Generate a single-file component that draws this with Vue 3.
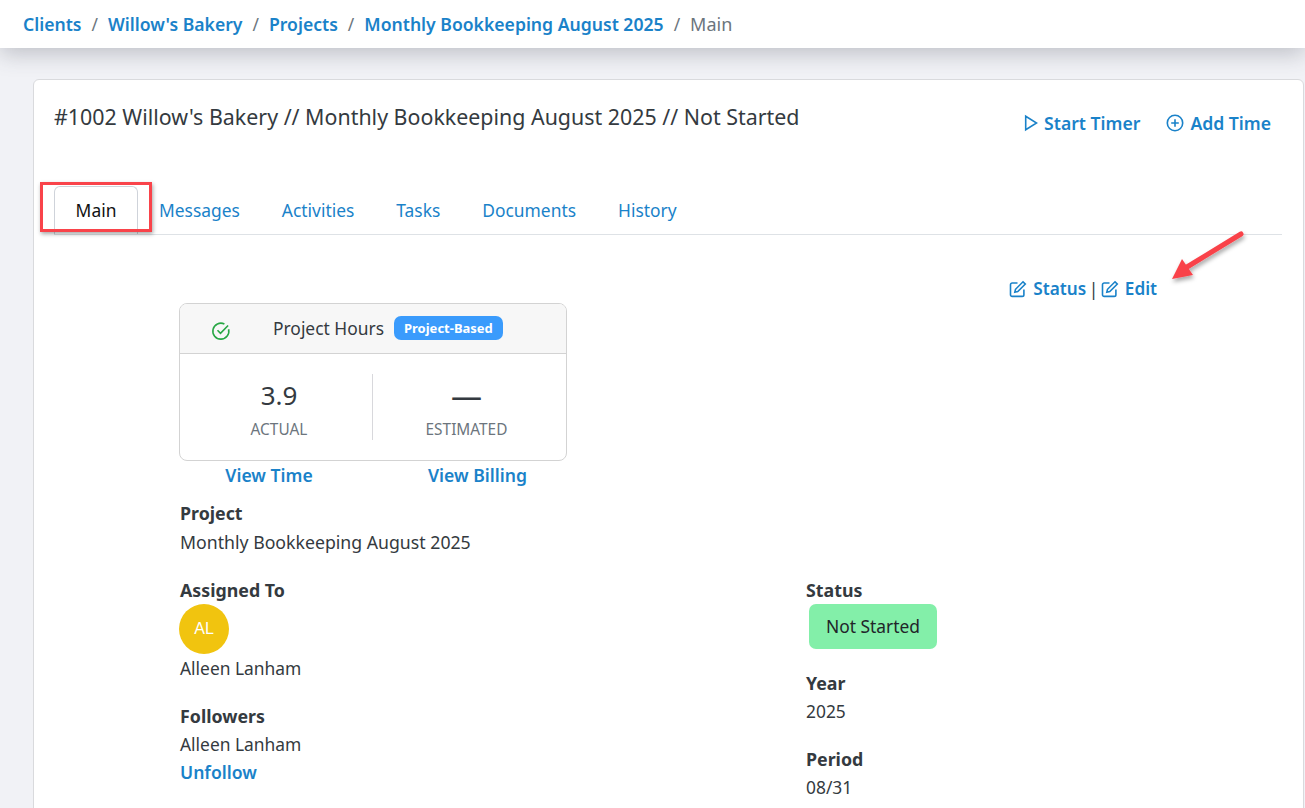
<script setup>
const crumbs = ['Clients', "Willow's Bakery", 'Projects', 'Monthly Bookkeeping August 2025']
const tabs = ['Main', 'Messages', 'Activities', 'Tasks', 'Documents', 'History']
</script>

<template>
  <div class="page">
    <nav class="topbar">
      <template v-for="c in crumbs" :key="c">
        <a class="crumb">{{ c }}</a>
        <span class="sep">/</span>
      </template>
      <span class="current">Main</span>
    </nav>

    <main class="card">
      <div class="title-row">
        <h1 class="title">#1002 Willow's Bakery // Monthly Bookkeeping August 2025 // Not Started</h1>
        <div class="actions">
          <a class="action">
            <svg class="icon play" viewBox="0 0 14 18"><path d="M1.7 2.2 L12.6 9 L1.7 15.8 Z" /></svg>
            Start Timer
          </a>
          <a class="action">
            <svg class="icon" viewBox="0 0 18 18">
              <circle cx="9" cy="9" r="7.7" />
              <path d="M9 5.2v7.6M5.2 9h7.6" />
            </svg>
            Add Time
          </a>
        </div>
      </div>

      <ul class="tabs">
        <li v-for="(t, i) in tabs" :key="t" class="tab" :class="{ active: i === 0 }">{{ t }}</li>
      </ul>

      <div class="edit-links">
        <a class="action">
          <svg class="icon" viewBox="0 0 18 18">
            <path d="M8.5 3H3.2A1.7 1.7 0 0 0 1.5 4.7v10a1.7 1.7 0 0 0 1.7 1.7h10a1.7 1.7 0 0 0 1.7-1.7V9.5" />
            <path d="M14 1.8l2.3 2.3-7.5 7.5-3 .7.7-3z" />
          </svg>
          Status
        </a>
        <span class="pipe">|</span>
        <a class="action">
          <svg class="icon" viewBox="0 0 18 18">
            <path d="M8.5 3H3.2A1.7 1.7 0 0 0 1.5 4.7v10a1.7 1.7 0 0 0 1.7 1.7h10a1.7 1.7 0 0 0 1.7-1.7V9.5" />
            <path d="M14 1.8l2.3 2.3-7.5 7.5-3 .7.7-3z" />
          </svg>
          Edit
        </a>
      </div>

      <div class="details">
        <div class="hours">
          <div class="hours-head">
            <svg class="check" viewBox="0 0 20 20">
              <path d="M17.6 8.2A8 8 0 1 1 13.4 3" stroke="#28a745" />
              <path d="M6.5 9.3l3 3 7.6-7.8" stroke="#28a745" />
            </svg>
            <span class="hours-title">Project Hours</span>
            <span class="pill">Project-Based</span>
          </div>
          <div class="hours-body">
            <div class="stat">
              <div class="stat-num">3.9</div>
              <div class="stat-label">ACTUAL</div>
            </div>
            <div class="stat">
              <div class="stat-num dash">—</div>
              <div class="stat-label">ESTIMATED</div>
            </div>
          </div>
        </div>
        <div class="hours-links">
          <a class="link">View Time</a>
          <a class="link">View Billing</a>
        </div>

        <div class="label">Project</div>
        <div class="value project-value">Monthly Bookkeeping August 2025</div>

        <div class="columns">
          <div>
            <div class="label">Assigned To</div>
            <div class="avatar">AL</div>
            <div class="value">Alleen Lanham</div>
            <div class="label followers">Followers</div>
            <div class="value">Alleen Lanham</div>
            <a class="link">Unfollow</a>
          </div>
          <div>
            <div class="label">Status</div>
            <div class="status">Not Started</div>
            <div class="label year">Year</div>
            <div class="value">2025</div>
            <div class="label period">Period</div>
            <div class="value">08/31</div>
          </div>
        </div>
      </div>
    </main>

    <!-- annotations on the screenshot -->
    <div class="mark-box"></div>
    <svg class="mark-arrow" viewBox="0 0 90 70" width="90" height="70">
      <defs>
        <filter id="arrow-shadow" x="-20%" y="-20%" width="150%" height="150%">
          <feDropShadow dx="1" dy="3" stdDeviation="2" flood-color="#000" flood-opacity="0.35" />
        </filter>
      </defs>
      <g filter="url(#arrow-shadow)">
        <path d="M27 41 L81 8" stroke="#f9434a" stroke-width="5" stroke-linecap="round" />
        <path d="M12 53 L22 33 L33 49 Z" fill="#f9434a" />
      </g>
    </svg>
  </div>
</template>

<style>
html, body {
  margin: 0;
  background: #f1f2f6;
}
</style>

<style scoped>
.page {
  position: relative;
  height: 808px;
  overflow: hidden;
  background: #f1f2f6;
  font-family: "Noto Sans", "Open Sans", sans-serif;
  font-size: 17.4px;
  line-height: 28px;
  color: #343a40;
}

a {
  color: #1a82c9;
  text-decoration: none;
}

.topbar {
  display: flex;
  align-items: center;
  height: 48px;
  padding-left: 23px;
  background: #fff;
  box-shadow: 0 6px 22px rgba(60, 65, 80, 0.28);
}

.crumb {
  font-size: 17.6px;
  font-weight: 600;
  color: #1a82c9;
}

.sep {
  margin: 0 10px;
  color: #6c757d;
}

.current {
  font-size: 18px;
  color: #6c757d;
}

.card {
  box-sizing: border-box;
  height: 760px;
  margin: 31px 1px 0 33px;
  padding: 0 21px 0 20px;
  background: #fff;
  border: 1px solid #d9dadd;
  border-radius: 6px;
}

.title-row {
  display: flex;
  align-items: flex-start;
  justify-content: space-between;
  box-sizing: border-box;
  height: 106px;
  padding: 21px 11px 0 0;
}

.title {
  margin: 0;
  font-size: 21.4px;
  line-height: 32px;
  font-weight: 400;
  color: #343a40;
}

.actions {
  display: flex;
  gap: 26px;
  padding-top: 8px;
}

.action {
  display: inline-flex;
  align-items: center;
  gap: 6px;
  font-size: 17.6px;
  font-weight: 600;
  color: #1a82c9;
}

.icon {
  width: 18px;
  height: 18px;
  fill: none;
  stroke: currentColor;
  stroke-width: 1.6;
}

.icon.play {
  width: 14px;
}

.tabs {
  display: flex;
  box-sizing: border-box;
  height: 49px;
  margin: 0;
  padding: 0;
  list-style: none;
  border-bottom: 1px solid #dee2e6;
}

.tab {
  padding: 10px 21px;
  line-height: 28px;
  color: #1a82c9;
}

.tab.active {
  width: 84px;
  height: 48px;
  box-sizing: border-box;
  padding: 9px 0 0;
  text-align: center;
  background: #fff;
  color: #111;
  border: 1px solid #cfd3da;
  border-bottom: 0;
  border-radius: 6px 6px 0 0;
}

.edit-links {
  display: flex;
  justify-content: flex-end;
  align-items: center;
  gap: 6px;
  height: 28px;
  margin-top: 40px;
  padding-right: 125px;
}

.edit-links .action {
  font-size: 17.2px;
}

.pipe {
  margin: 0 -3.5px;
  color: #343a40;
}

.details {
  padding-left: 126px;
}

.hours {
  box-sizing: border-box;
  width: 388px;
  height: 158px;
  margin-left: -1px;
  border: 1px solid #d3d3d3;
  border-radius: 8px;
  overflow: hidden;
}

.hours-head {
  display: flex;
  align-items: center;
  height: 49px;
  background: #f7f7f7;
  border-bottom: 1px solid #d3d3d3;
}

.check {
  width: 20px;
  height: 20px;
  margin: 4px 0 0 31px;
  fill: none;
  stroke-width: 1.6;
}

.hours-title {
  margin: -2px 0 0 42px;
}

.pill {
  margin: -2px 0 0 10px;
  padding: 0 10px;
  font-size: 13px;
  line-height: 24px;
  font-weight: 700;
  color: #fff;
  background: #3a9bfc;
  border-radius: 7px;
}

.hours-body {
  display: grid;
  grid-template-columns: 193px 1fr;
  padding-top: 20px;
}

.stat {
  box-sizing: border-box;
  height: 66px;
  padding-right: 6px;
  text-align: center;
}

.stat:first-child {
  padding: 0 0 0 6px;
  border-right: 1px solid #d8d8dc;
}

.stat-num {
  padding-top: 1px;
  font-size: 26px;
  line-height: 40px;
  color: #343a40;
}

.stat-num.dash {
  font-size: 31px;
}

.stat-label {
  padding-top: 4px;
  font-size: 15.4px;
  line-height: 22px;
  color: #6c757d;
}

.hours-links {
  display: grid;
  grid-template-columns: 178px 239px;
  height: 38px;
}

.hours-links .link {
  text-align: center;
}

.link {
  display: block;
  font-size: 17.6px;
  font-weight: 600;
  color: #1a82c9;
}

.label {
  font-size: 17.8px;
  font-weight: 700;
  color: #343a40;
}

.value {
  color: #343a40;
}

.project-value {
  margin-top: 1px;
  font-size: 17.7px;
}

.columns {
  display: grid;
  grid-template-columns: 626px 1fr;
  margin-top: 20px;
}

.avatar {
  display: flex;
  align-items: center;
  justify-content: center;
  width: 50px;
  height: 50px;
  margin-left: -1px;
  background: #f1c40f;
  border-radius: 50%;
  color: #fff;
  font-family: "Liberation Sans", sans-serif;
  font-size: 16px;
}

.followers {
  margin-top: 20px;
}

.status {
  display: flex;
  align-items: center;
  justify-content: center;
  box-sizing: border-box;
  width: 128px;
  height: 45px;
  margin-left: 3px;
  padding-bottom: 2px;
  background: #83efa9;
  border-radius: 7px;
  color: #212529;
}

.year {
  margin-top: 20px;
}

.period {
  margin-top: 20px;
}

.mark-box {
  position: absolute;
  left: 40px;
  top: 182px;
  width: 112px;
  height: 50px;
  box-sizing: border-box;
  border: 3px solid #f9434a;
  box-shadow: 1px 2px 4px rgba(0, 0, 0, 0.35);
}

.mark-arrow {
  position: absolute;
  left: 1160px;
  top: 226px;
}
</style>
